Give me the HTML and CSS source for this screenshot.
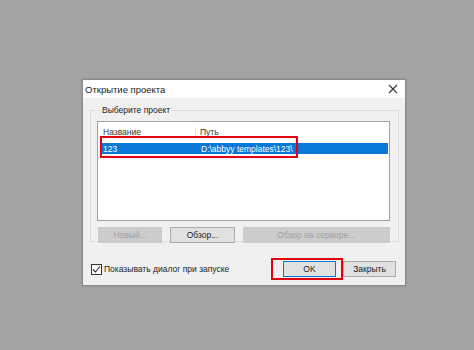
FILE: index.html
```html
<!DOCTYPE html>
<html lang="ru">
<head>
  <meta charset="UTF-8" />
  <title>Открытие проекта</title>
  <link rel="stylesheet" href="styles.css">
</head>
<body>
  <div class="dialog">
    <div class="titlebar">
      <span class="title">Открытие проекта</span>
      <svg class="close" width="10" height="10" viewBox="0 0 10 10">
        <path d="M1 1 L9 9 M9 1 L1 9" stroke="#333" stroke-width="1.1" fill="none" />
      </svg>
    </div>

    <div class="content">
      <fieldset class="group">
        <legend>Выберите проект</legend>

        <div class="list">
          <div class="list-head">
            <span class="col-name">Название</span>
            <span class="col-path">Путь</span>
          </div>
          <div class="row selected">
            <span class="col-name">123</span>
            <span class="col-path">D:\abbyy templates\123\</span>
          </div>
          <!-- рамка выделения -->
          <div class="mark mark-row"></div>
        </div>

        <div class="actions">
          <button class="btn btn-new" disabled>Новый...</button>
          <button class="btn btn-browse">Обзор...</button>
          <button class="btn btn-server" disabled>Обзор на сервере...</button>
        </div>
      </fieldset>

      <div class="footer">
        <label class="check">
          <span class="box">
            <svg width="9" height="9" viewBox="0 0 9 9">
              <path d="M1 4.5 L3.5 7 L8 1.5" stroke="#222" stroke-width="1.1" fill="none" />
            </svg>
          </span>
          Показывать диалог при запуске
        </label>
        <div class="footer-buttons">
          <button class="btn btn-ok">OK</button>
          <button class="btn btn-close">Закрыть</button>
          <div class="mark mark-ok"></div>
        </div>
      </div>
    </div>
  </div>
</body>
</html>
```

FILE: styles.css
```css
body {
  margin: 0;
  background: #a3a3a3;
  font-family: 'Liberation Sans', 'Noto Sans', Arial, sans-serif;
  font-size: 8.5px;
  color: #222;
  min-height: 350px;
  overflow: hidden;
}

.dialog {
  width: 322px;
  height: 205px;
  margin: 79px 0 0 82px;
  border: 1px solid #8a8a8a;
  background: #f0f0f0;
  display: flex;
  flex-direction: column;
  box-shadow: 0 0 2px rgba(0, 0, 0, 0.15);
}

.titlebar {
  height: 18px;
  background: #fff;
  display: flex;
  align-items: center;
  justify-content: space-between;
  padding: 0 7px 0 2px;
}

.title {
  font-size: 9.5px;
  color: #1a1a1a;
}

.content {
  flex: 1;
  padding: 0 6px 0 7px;
  display: flex;
  flex-direction: column;
}

.group {
  margin: 7px 0 0 0;
  padding: 6px 8px 7px 6px;
  border: 1px solid #dcdcdc;
  height: 137px;
  box-sizing: border-box;
  min-width: 0;
}

.group legend {
  padding: 0 1px;
  margin-left: 4px;
  font-size: 8.5px;
  color: #222;
}

.list {
  position: relative;
  height: 100px;
  background: #fff;
  border: 1px solid #a0a0a0;
  box-sizing: border-box;
}

.list-head,
.row {
  display: flex;
  align-items: center;
}

.list-head {
  height: 16px;
  margin-top: 2px;
  color: #333;
}

.list-head .col-name {
  border-right: 1px solid #e5e5e5;
}

.col-name {
  width: 92px;
  padding-left: 5px;
  flex-shrink: 0;
}

.col-path {
  padding-left: 4px;
}

.row {
  height: 11px;
  margin: 3px 1px 0 3px;
}

.row.selected {
  background: #0a78d7;
  color: #fff;
}

.row .col-name {
  padding-left: 2px;
  width: 95px;
}

.row .col-path {
  padding-left: 3px;
}

.mark {
  position: absolute;
  border: 2.5px solid #e3000f;
  box-sizing: border-box;
}

.mark-row {
  left: 2px;
  top: 14px;
  width: 198px;
  height: 22px;
}

.actions {
  display: flex;
  margin-top: 6px;
  gap: 8px;
  padding-left: 1px;
}

.btn {
  font-family: inherit;
  font-size: 8.5px;
  height: 16px;
  padding: 0;
  border: 1px solid #adadad;
  background: #e1e1e1;
  color: #222;
}

.btn[disabled] {
  border-color: #cccccc;
  background: #cccccc;
  color: #a0a0a0;
}

.btn-new,
.btn-browse {
  width: 65px;
}

.btn-server {
  width: 149px;
}

.footer {
  display: flex;
  align-items: center;
  justify-content: space-between;
  margin-top: 19px;
  padding-right: 3px;
}

.check {
  display: flex;
  align-items: center;
  gap: 2px;
  font-size: 8.5px;
  color: #222;
  margin-left: 1px;
}

.box {
  width: 9px;
  height: 9px;
  border: 1px solid #333;
  background: #fff;
  display: flex;
}

.footer-buttons {
  position: relative;
  display: flex;
  gap: 7px;
}

.btn-ok,
.btn-close {
  width: 53px;
}

.btn-ok {
  border-color: #0078d7;
}

.mark-ok {
  left: -12px;
  top: -3px;
  width: 72px;
  height: 22px;
}
```
